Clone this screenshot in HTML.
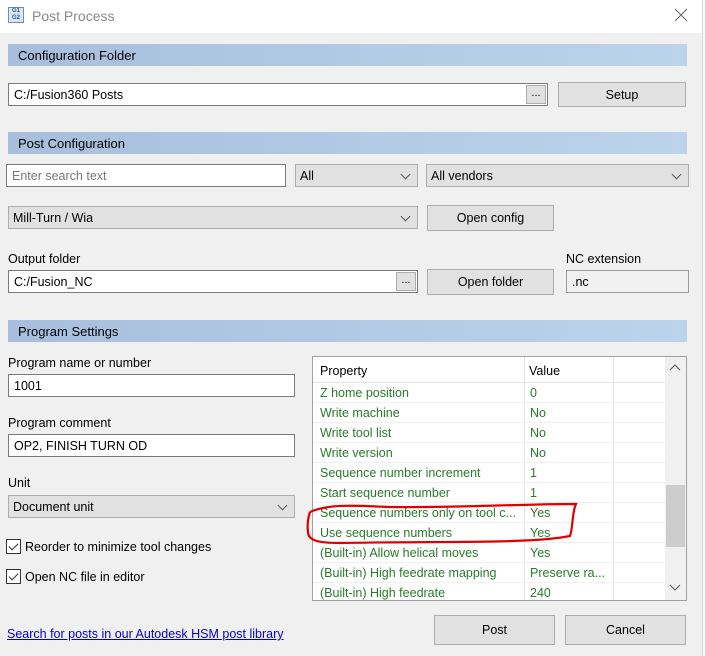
<!DOCTYPE html>
<html><head><meta charset="utf-8"><style>
*{box-sizing:border-box;margin:0;padding:0}
body{width:705px;height:656px;background:#f0f0f0;font-family:"Liberation Sans",sans-serif;font-size:12.5px;color:#000;position:relative;overflow:hidden}
.a{position:absolute}
.title{left:0;top:0;width:702px;height:33px;background:#fff}
.edge{left:702px;top:0;width:3px;height:656px;background:#fafafa;border-left:1px solid #d8d8d8}
.bar{left:8px;width:679px;height:22px;background:linear-gradient(90deg,#a7bfdc,#bcd3ec);padding:4px 10px;font-size:13px}
.inp{background:#fff;border:1px solid #7a7a7a;padding:4px 5px;height:23px;white-space:nowrap;overflow:hidden}
.btn{background:#e1e1e1;border:1px solid #adadad;text-align:center;line-height:25px}
.cmb{background:#e1e1e1;border:1px solid #adadad;padding:4px 4px;height:23px}
.cmb:after{content:"";position:absolute;right:8px;top:6px;width:6px;height:6px;border-right:1px solid #555;border-bottom:1px solid #555;transform:rotate(45deg)}
.dots{width:20px;height:19px;background:#e1e1e1;border:1px solid #adadad;font-size:11px;text-align:center;line-height:14px}
.tbl{left:312px;top:356px;width:375px;height:245px;background:#fff;border:1px solid #a0a0a0;overflow:hidden}
.row{position:absolute;left:0;width:352px;height:20px;border-bottom:1px solid #f0f0f0;color:#2a7a2a;font-size:12.5px}
.row span{position:absolute;top:3px}
.cb{width:15px;height:15px;border:1px solid #333;background:#fff}
.cb:after{content:"";position:absolute;left:4px;top:1px;width:4px;height:8px;border-right:1.3px solid #333;border-bottom:1.3px solid #333;transform:rotate(45deg)}
</style></head><body>
<div class="a title"></div>
<div class="a edge"></div>
<div class="a" style="left:8px;top:7px;width:16px;height:16px;border:1px solid #6a8fbf;background:#dbe6f4;font-size:6px;line-height:7px;color:#2c5a96;text-align:center;font-weight:bold">G1<br>G2</div>
<div class="a" style="left:32px;top:8px;font-size:14px;color:#8a8a8a">Post Process</div>
<svg class="a" style="left:674px;top:8px" width="14" height="14"><path d="M1 1L13 13M13 1L1 13" stroke="#666" stroke-width="1"/></svg>

<div class="a bar" style="top:44px">Configuration Folder</div>
<div class="a inp" style="left:8px;top:83px;width:540px">C:/Fusion360 Posts</div>
<div class="a dots" style="left:526px;top:85px">...</div>
<div class="a btn" style="left:558px;top:82px;width:128px;height:25px">Setup</div>

<div class="a bar" style="top:132px">Post Configuration</div>
<div class="a inp" style="left:6px;top:164px;width:280px;color:#777">Enter search text</div>
<div class="a cmb" style="left:295px;top:164px;width:123px">All</div>
<div class="a cmb" style="left:426px;top:164px;width:263px">All vendors</div>
<div class="a cmb" style="left:8px;top:206px;width:410px">Mill-Turn / Wia</div>
<div class="a btn" style="left:427px;top:205px;width:127px;height:26px">Open config</div>

<div class="a" style="left:8px;top:252px">Output folder</div>
<div class="a inp" style="left:8px;top:270px;width:410px">C:/Fusion_NC</div>
<div class="a dots" style="left:396px;top:272px">...</div>
<div class="a btn" style="left:427px;top:269px;width:127px;height:26px">Open folder</div>
<div class="a" style="left:566px;top:252px">NC extension</div>
<div class="a inp" style="left:566px;top:270px;width:123px;background:#f0f0f0;border-color:#9a9a9a">.nc</div>

<div class="a bar" style="top:320px">Program Settings</div>
<div class="a" style="left:8px;top:356px">Program name or number</div>
<div class="a inp" style="left:8px;top:374px;width:287px">1001</div>
<div class="a" style="left:8px;top:416px">Program comment</div>
<div class="a inp" style="left:8px;top:434px;width:287px">OP2, FINISH TURN OD</div>
<div class="a" style="left:8px;top:476px">Unit</div>
<div class="a cmb" style="left:8px;top:495px;width:287px">Document unit</div>
<div class="a cb" style="left:6px;top:539px"></div>
<div class="a" style="left:25px;top:540px">Reorder to minimize tool changes</div>
<div class="a cb" style="left:6px;top:569px"></div>
<div class="a" style="left:25px;top:570px">Open NC file in editor</div>
<div class="a" style="left:7px;top:627px;color:#0000cc;text-decoration:underline">Search for posts in our Autodesk HSM post library</div>

<div class="a tbl">
<div class="row" style="top:0;height:26px;color:#000;border-bottom:1px solid #e5e5e5"><span style="left:7px;top:7px">Property</span><span style="left:216px;top:7px">Value</span></div>
<div class="a" style="left:211px;top:0;width:1px;height:245px;background:#e5e5e5"></div>
<div class="a" style="left:300px;top:0;width:1px;height:245px;background:#e5e5e5"></div>
<div class="row" style="top:26px"><span style="left:7px">Z home position</span><span style="left:217px">0</span></div>
<div class="row" style="top:46px"><span style="left:7px">Write machine</span><span style="left:217px">No</span></div>
<div class="row" style="top:66px"><span style="left:7px">Write tool list</span><span style="left:217px">No</span></div>
<div class="row" style="top:86px"><span style="left:7px">Write version</span><span style="left:217px">No</span></div>
<div class="row" style="top:106px"><span style="left:7px">Sequence number increment</span><span style="left:217px">1</span></div>
<div class="row" style="top:126px"><span style="left:7px">Start sequence number</span><span style="left:217px">1</span></div>
<div class="row" style="top:146px"><span style="left:7px">Sequence numbers only on tool c...</span><span style="left:217px">Yes</span></div>
<div class="row" style="top:166px"><span style="left:7px">Use sequence numbers</span><span style="left:217px">Yes</span></div>
<div class="row" style="top:186px"><span style="left:7px">(Built-in) Allow helical moves</span><span style="left:217px">Yes</span></div>
<div class="row" style="top:206px"><span style="left:7px">(Built-in) High feedrate mapping</span><span style="left:217px">Preserve ra...</span></div>
<div class="row" style="top:226px"><span style="left:7px">(Built-in) High feedrate</span><span style="left:217px">240</span></div>
<div class="a" style="left:352px;top:0;width:21px;height:243px;background:#f0f0f0"></div>
<div class="a" style="left:353px;top:128px;width:19px;height:62px;background:#cdcdcd"></div>
<svg class="a" style="left:356px;top:6px" width="12" height="10"><path d="M1 7L6 2L11 7" stroke="#555" fill="none"/></svg>
<svg class="a" style="left:356px;top:226px" width="12" height="10"><path d="M1 2L6 7L11 2" stroke="#555" fill="none"/></svg>
</div>
<svg class="a" style="left:300px;top:498px" width="285" height="50"><path d="M10 14C30 5 60 8 90 9C150 10 220 6 276 6C272 14 273 30 270 38C230 46 140 43 40 45C20 45 8 43 8 34C7 26 8 20 10 14" stroke="#e00000" stroke-width="2.2" fill="none"/></svg>

<div class="a btn" style="left:434px;top:615px;width:121px;height:30px;line-height:29px">Post</div>
<div class="a btn" style="left:565px;top:615px;width:121px;height:30px;line-height:29px">Cancel</div>
</body></html>
